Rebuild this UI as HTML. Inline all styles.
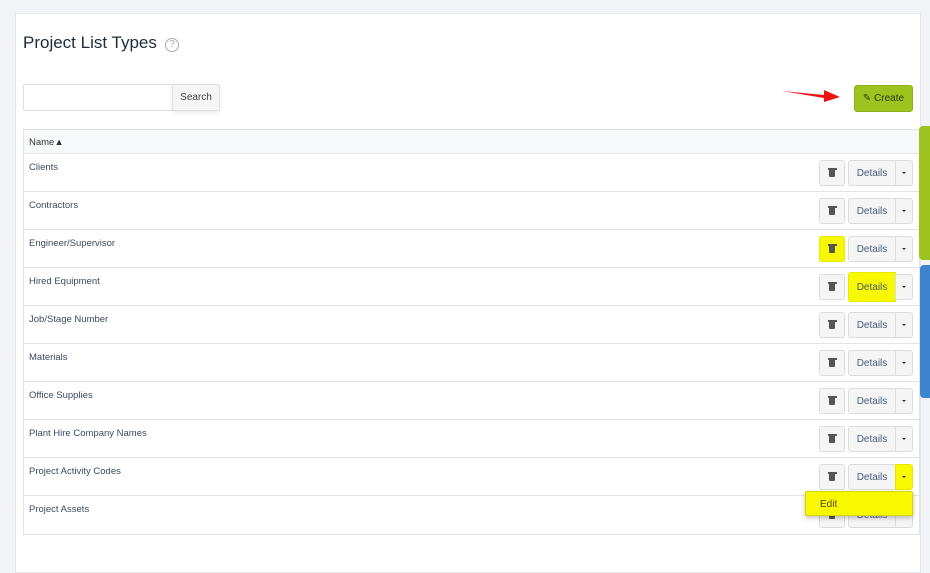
<!DOCTYPE html>
<html><head><meta charset="utf-8"><style>
*{box-sizing:border-box;margin:0;padding:0}
body{width:930px;height:553px;overflow:hidden;background:#f2f3f7;font-family:"Liberation Sans",sans-serif;position:relative}
.card{position:absolute;left:15px;top:13px;width:906px;height:560px;background:#fff;border:1px solid #e6e7eb}
h1{position:absolute;left:23px;top:33px;font-size:17px;font-weight:normal;color:#1f2a3a}
.help{position:absolute;left:165px;top:38px;width:14px;height:14px;border:1.3px solid #aaa;border-radius:50%;font-size:10px;color:#aaa;text-align:center;line-height:12px}
.inp{position:absolute;left:23px;top:84px;width:150px;height:27px;border:1px solid #dcdde0;border-radius:2px}
.sbtn{position:absolute;left:172px;top:84px;width:48px;height:27px;border:1px solid #dcdde0;background:#f5f5f6;font-size:10px;color:#444;text-align:center;line-height:26px;box-shadow:0 2px 5px rgba(0,0,0,.08);border-radius:2px}
.create{position:absolute;left:854px;top:85px;width:59px;height:27px;background:#9dc31f;border:1px solid #8cb01a;border-radius:3px;font-size:10px;color:#2c3a10;text-align:center;line-height:26px}
.table{position:absolute;left:23px;top:129px;width:897px;border:1px solid #e2e3e6}
.th{height:24px;background:#f8f9fb;border-bottom:1px solid #e2e3e6;font-size:9.5px;color:#333;padding:7px 5px}
.tr{height:38px;border-bottom:1px solid #e2e3e6;position:relative;font-size:9.5px;color:#3d4a60;padding:8px 5px}
.tr:last-child{border-bottom:none}
.b{position:absolute;top:6px;height:26px;background:#f5f5f5;border:1px solid #dcdcdc;border-radius:3px;font-size:10px;color:#4a5a7a;text-align:center;line-height:25px}
.t{left:795px;width:26px}
.d{left:824px;width:48px;border-radius:3px 0 0 3px}
.c{left:871px;width:18px;border-radius:0 3px 3px 0}
.c:after{content:"";position:absolute;left:6px;top:11px;border-left:2.5px solid transparent;border-right:2.5px solid transparent;border-top:2.5px solid #333}
.y{background:#f8f800;border-color:#e8e800}
.trash{display:inline-block;width:6px;height:7px;background:#555;margin-top:9px;position:relative;border-radius:0 0 1px 1px}
.trash:before{content:"";position:absolute;left:-1.5px;top:-2px;width:9px;height:1.5px;background:#555}
.menu{position:absolute;left:805px;top:491px;width:108px;height:25px;background:#f8f800;border:1px solid #d8d800;box-shadow:0 2px 5px rgba(0,0,0,.25);border-radius:2px;font-size:10px;color:#554400;padding:7px 14px}
.g{position:absolute;left:919px;top:126px;width:14px;height:134px;background:#9dc31f;border-radius:4px 0 0 4px}
.bl{position:absolute;left:920px;top:265px;width:14px;height:133px;background:#3d85cf;border-radius:4px 0 0 4px}
</style></head><body>
<div class="card"></div>
<h1>Project List Types</h1><div class="help">?</div>
<div class="inp"></div><div class="sbtn">Search</div>
<svg style="position:absolute;left:780px;top:88px" width="62" height="16"><polygon points="2,3 44,7 44,2 60,9 44,14 44,10" fill="#ee1111"/></svg>
<div class="create">&#9998; Create</div>
<div class="table">
<div class="th">Name&#9650;</div>
<div class="tr">Clients<div class="b t"><span class="trash"></span></div><div class="b d">Details</div><div class="b c"></div></div>
<div class="tr">Contractors<div class="b t"><span class="trash"></span></div><div class="b d">Details</div><div class="b c"></div></div>
<div class="tr">Engineer/Supervisor<div class="b t y"><span class="trash"></span></div><div class="b d">Details</div><div class="b c"></div></div>
<div class="tr">Hired Equipment<div class="b t"><span class="trash"></span></div><div class="b d y" style="height:30px;top:4px;line-height:29px">Details</div><div class="b c"></div></div>
<div class="tr">Job/Stage Number<div class="b t"><span class="trash"></span></div><div class="b d">Details</div><div class="b c"></div></div>
<div class="tr">Materials<div class="b t"><span class="trash"></span></div><div class="b d">Details</div><div class="b c"></div></div>
<div class="tr">Office Supplies<div class="b t"><span class="trash"></span></div><div class="b d">Details</div><div class="b c"></div></div>
<div class="tr">Plant Hire Company Names<div class="b t"><span class="trash"></span></div><div class="b d">Details</div><div class="b c"></div></div>
<div class="tr">Project Activity Codes<div class="b t"><span class="trash"></span></div><div class="b d">Details</div><div class="b c y"></div></div>
<div class="tr">Project Assets<div class="b t"><span class="trash"></span></div><div class="b d">Details</div><div class="b c"></div></div>
</div>
<div class="menu">Edit</div>
<div class="g"></div><div class="bl"></div>
</body></html>
